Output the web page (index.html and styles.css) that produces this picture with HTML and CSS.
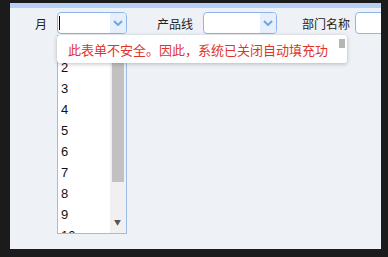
FILE: index.html
```html
<!doctype html>
<html lang="zh">
  <head>
    <title>查询</title>
    <meta charset="UTF-8" />
    <meta name="viewport" content="width=device-width, initial-scale=1" />
    <link rel="stylesheet" href="styles.css">
  </head>

  <body>
    <div class="page">
      <div class="filter-row">
        <label class="lbl lbl-month">月</label>
        <div class="sel sel-month">
          <span class="caret"></span>
          <span class="sel-arrow">
            <svg width="10" height="6" viewBox="0 0 10 6"><path d="M1 1 L5 5 L9 1" fill="none" stroke="#6ea6e4" stroke-width="2"/></svg>
          </span>
        </div>

        <label class="lbl lbl-line">产品线</label>
        <div class="sel sel-line">
          <span class="sel-arrow">
            <svg width="10" height="6" viewBox="0 0 10 6"><path d="M1 1 L5 5 L9 1" fill="none" stroke="#6ea6e4" stroke-width="2"/></svg>
          </span>
        </div>

        <label class="lbl lbl-dept">部门名称</label>
        <div class="text-input"></div>
      </div>

      <div class="dropdown">
        <ul class="options">
          <li>1</li>
          <li>2</li>
          <li>3</li>
          <li>4</li>
          <li>5</li>
          <li>6</li>
          <li>7</li>
          <li>8</li>
          <li>9</li>
          <li>10</li>
        </ul>
        <div class="scrollbar">
          <div class="thumb"></div>
          <span class="down">&#9660;</span>
        </div>
      </div>

      <div class="autofill-warning">
        <span>此表单不安全。因此，系统已关闭自动填充功</span>
        <div class="warn-thumb"></div>
      </div>
    </div>
  </body>
</html>
```

FILE: styles.css
```css
body {
  margin: 0;
  padding: 3px 7px 8px 10px;
  background-color: #1b1b1b;
  font-family: 'Noto Sans CJK SC', 'Liberation Sans', sans-serif;
}

.page {
  position: relative;
  height: 241px;
  background-color: #eef2f6;
  border-top: 5px solid #b6cff4;
  overflow: hidden;
}

.filter-row {
  display: flex;
  align-items: center;
  padding-top: 4px;
  height: 22px;
}

.filter-row > * {
  flex-shrink: 0;
}

.lbl {
  font-size: 12px;
  color: #222;
  white-space: nowrap;
}

.lbl-month {
  margin-left: 25px;
  margin-right: 10px;
}

.lbl-line {
  margin-left: 30px;
  margin-right: 10px;
}

.lbl-dept {
  margin-left: 25px;
  margin-right: 5px;
}

.sel {
  position: relative;
  display: flex;
  justify-content: flex-end;
  height: 20px;
  background: #fff;
  border: 1px solid #8fb6ea;
  border-radius: 4px;
}

.sel-month {
  width: 68px;
}

.sel-line {
  width: 72px;
}

.sel-arrow {
  display: flex;
  align-items: center;
  justify-content: center;
  width: 16px;
  background: #e6effb;
  border-radius: 0 3px 3px 0;
}

.caret {
  position: absolute;
  left: 1px;
  top: 3px;
  width: 1px;
  height: 14px;
  background: #000;
}

.text-input {
  width: 60px;
  height: 20px;
  background: #fff;
  border: 1px solid #8fb6ea;
  border-radius: 4px;
}

.dropdown {
  position: absolute;
  left: 47px;
  top: 27px;
  width: 68px;
  height: 197px;
  display: flex;
  background: #fff;
  border: 1px solid #9dbce9;
  overflow: hidden;
}

.options {
  flex: 1;
  margin: 0;
  padding: 0 0 0 3px;
  list-style: none;
  font-family: 'Liberation Sans', sans-serif;
  font-size: 13px;
  color: #111;
}

.options li {
  height: 21px;
  line-height: 21px;
}

.scrollbar {
  position: relative;
  width: 16px;
  background: #f0f0f0;
}

.thumb {
  margin: 0 2px;
  height: 146px;
  background: #c1c1c1;
}

.down {
  position: absolute;
  left: 4px;
  bottom: 6px;
  font-size: 7px;
  color: #555;
}

.autofill-warning {
  position: absolute;
  left: 47px;
  top: 27px;
  width: 290px;
  height: 28px;
  display: flex;
  align-items: center;
  padding-left: 11px;
  box-sizing: border-box;
  background: #fff;
  border-radius: 3px;
  box-shadow: 0 1px 4px rgba(0, 0, 0, 0.25);
  font-size: 13px;
  color: #e0342b;
  white-space: nowrap;
}

.warn-thumb {
  position: absolute;
  right: 2px;
  top: 4px;
  width: 6px;
  height: 9px;
  background: #b5b5b5;
}
```
